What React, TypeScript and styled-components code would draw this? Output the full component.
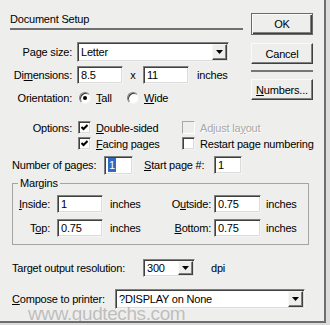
import React from 'react';
import styled, { createGlobalStyle } from 'styled-components';

const Global = createGlobalStyle`
  html, body { margin: 0; padding: 0; background: #dcdcdc; }
  body {
    font-family: 'Liberation Sans', Arial, sans-serif;
    font-size: 11px;
    letter-spacing: -0.2px;
    color: #000;
  }
`;

const BG = '#eeeeec';

const Dialog = styled.div`
  position: relative;
  box-sizing: border-box;
  width: 326px;
  height: 323px;
  background: ${BG};
  border-right: 2px solid #6e6e6e;
  border-bottom: 2px solid #6e6e6e;
  padding-left: 10px;
  display: flex;
  flex-direction: column;
  overflow: hidden;
`;

const Top = styled.div`
  display: flex;
  gap: 8px;
`;

const LeftCol = styled.div`
  width: 233px;
  display: flex;
  flex-direction: column;
`;

const ButtonCol = styled.div`
  width: 62px;
  display: flex;
  flex-direction: column;
  padding-top: 13px;
`;

const Title = styled.div`
  padding-top: 13px;
  height: 13px;
  line-height: 13px;
`;

const Rule = styled.div`
  margin-top: 2px;
  height: 2px;
  background: #707070;
`;

const Row = styled.div<{ $mt: number; $h: number; $ml?: number }>`
  display: flex;
  align-items: center;
  margin-top: ${p => p.$mt}px;
  margin-left: ${p => p.$ml ?? 0}px;
  height: ${p => p.$h}px;
  white-space: nowrap;
`;

const Label = styled.span<{ $w: number; $align?: 'left' | 'right' | 'center'; $ml?: number }>`
  flex: none;
  width: ${p => p.$w}px;
  margin-left: ${p => p.$ml ?? 0}px;
  text-align: ${p => p.$align || 'right'};
  white-space: nowrap;
`;

const Unit = styled.span<{ $ml?: number }>`
  flex: none;
  margin-left: ${p => p.$ml ?? 0}px;
`;

const U = styled.span`
  text-decoration: underline;
`;

const Field = styled.div<{ $w: number; $h: number; $ml?: number }>`
  box-sizing: border-box;
  flex: none;
  width: ${p => p.$w}px;
  height: ${p => p.$h}px;
  margin-left: ${p => p.$ml ?? 0}px;
  background: #fff;
  border: 1px solid;
  border-color: #808080 #f4f4f4 #f4f4f4 #808080;
  box-shadow: inset 1px 1px 0 #404040, inset -1px -1px 0 #dcdcdc;
  padding-left: 3px;
  display: flex;
  align-items: center;
  white-space: nowrap;
  overflow: hidden;
`;

const DropBtn = styled.span`
  box-sizing: border-box;
  flex: none;
  align-self: stretch;
  margin: 1px 1px 1px auto;
  width: 15px;
  background: ${BG};
  border: 1px solid;
  border-color: #f8f8f8 #404040 #404040 #f8f8f8;
  box-shadow: inset -1px -1px 0 #808080;
  display: flex;
  align-items: center;
  justify-content: center;
`;

const Selected = styled.span`
  background: #316ac5;
  color: #fff;
  padding: 0 1px;
  line-height: 14px;
`;

const Button = styled.div<{ $h: number; $mt: number; $default?: boolean }>`
  box-sizing: border-box;
  height: ${p => p.$h}px;
  margin-top: ${p => p.$mt}px;
  display: flex;
  align-items: center;
  justify-content: center;
  background: ${BG};
  border: 1px solid;
  border-color: ${p => (p.$default ? '#6a6a6a' : '#fafafa #404040 #404040 #fafafa')};
  box-shadow: ${p =>
    p.$default
      ? 'inset 1px 1px 0 #fafafa, inset -1px -1px 0 #404040, inset -2px -2px 0 #808080'
      : 'inset -1px -1px 0 #808080'};
`;

const BtnRule = styled.div`
  margin-top: 6px;
  height: 2px;
  background: #777;
`;

const Options = styled.div`
  display: grid;
  grid-template-columns: 62px 110px 1fr;
  grid-auto-rows: 13px;
  row-gap: 3px;
  margin-top: 15px;
`;

const OptLabel = styled.span`
  text-align: right;
  align-self: center;
`;

const CheckItem = styled.div<{ $ml?: number; $disabled?: boolean }>`
  display: flex;
  align-items: center;
  gap: 5px;
  padding-left: ${p => p.$ml ?? 0}px;
  white-space: nowrap;
  color: ${p => (p.$disabled ? '#a8a8a8' : '#000')};
  text-shadow: ${p => (p.$disabled ? '1px 1px 0 #ffffff' : 'none')};
`;

const Box = styled.span<{ $disabled?: boolean }>`
  box-sizing: border-box;
  flex: none;
  width: 13px;
  height: 13px;
  background: ${p => (p.$disabled ? BG : '#fff')};
  border: 1px solid;
  border-color: ${p => (p.$disabled ? '#a8a8a8 #fff #fff #a8a8a8' : '#808080 #f4f4f4 #f4f4f4 #808080')};
  box-shadow: ${p => (p.$disabled ? 'none' : 'inset 1px 1px 0 #404040, inset -1px -1px 0 #dcdcdc')};
  display: flex;
  align-items: center;
  justify-content: center;
`;

const RadioItem = styled.div<{ $w?: number; $ml?: number }>`
  flex: none;
  display: flex;
  align-items: center;
  gap: 5px;
  width: ${p => (p.$w ? `${p.$w}px` : 'auto')};
  margin-left: ${p => p.$ml ?? 0}px;
`;

const RadioCircle = styled.span`
  box-sizing: border-box;
  flex: none;
  width: 12px;
  height: 12px;
  border-radius: 50%;
  background: #fff;
  border: 1px solid;
  border-color: #808080 #f4f4f4 #f4f4f4 #808080;
  box-shadow: inset 1px 1px 0 #404040;
  display: flex;
  align-items: center;
  justify-content: center;
`;

const Dot = styled.span`
  width: 4px;
  height: 4px;
  border-radius: 50%;
  background: #000;
`;

const Group = styled.fieldset`
  box-sizing: border-box;
  width: 297px;
  margin: 3px 0 0 2px;
  padding: 0 0 7px 0;
  border: 1px solid #a4a4a4;
  min-inline-size: 0;
`;

const Legend = styled.legend`
  margin-left: 5px;
  padding: 0 2px;
  line-height: 13px;
`;

const Watermark = styled.div`
  position: absolute;
  left: 28px;
  top: 306px;
  font-family: 'Liberation Sans', Arial, sans-serif;
  font-size: 19px;
  line-height: 16px;
  letter-spacing: -0.4px;
  color: rgba(120, 120, 120, 0.42);
  pointer-events: none;
  white-space: nowrap;
`;

const Arrow = () => (
  <svg width="7" height="4" viewBox="0 0 7 4">
    <polygon points="0,0 7,0 3.5,4" fill="#000" />
  </svg>
);

const Tick = () => (
  <svg width="7" height="7" viewBox="0 0 7 7">
    <polyline points="0.5,3 2.5,5 6.5,1" fill="none" stroke="#000" strokeWidth="2" />
  </svg>
);

const Select: React.FC<{ w: number; h: number; ml?: number; children: React.ReactNode }> = ({ w, h, ml, children }) => (
  <Field $w={w} $h={h} $ml={ml}>
    <span>{children}</span>
    <DropBtn>
      <Arrow />
    </DropBtn>
  </Field>
);

const Checkbox: React.FC<{ checked?: boolean; disabled?: boolean; ml?: number; children: React.ReactNode }> = ({
  checked,
  disabled,
  ml,
  children,
}) => (
  <CheckItem $ml={ml} $disabled={disabled}>
    <Box $disabled={disabled}>{checked && <Tick />}</Box>
    <span>{children}</span>
  </CheckItem>
);

export default function App() {
  return (
    <>
      <Global />
      <Dialog>
        <Top>
          <LeftCol>
            <Title>Document Setup</Title>
            <Rule />
            <Row $mt={12} $h={20}>
              <Label $w={62}>
                Pa<U>g</U>e size:
              </Label>
              <Select w={152} h={20} ml={5}>
                Letter
              </Select>
            </Row>
            <Row $mt={4} $h={18}>
              <Label $w={62}>
                Di<U>m</U>ensions:
              </Label>
              <Field $w={46} $h={18} $ml={5}>
                8.5
              </Field>
              <Label $w={20} $align="center">
                x
              </Label>
              <Field $w={46} $h={18}>
                11
              </Field>
              <Unit $ml={8}>inches</Unit>
            </Row>
            <Row $mt={6} $h={16}>
              <Label $w={62}>Orientation:</Label>
              <RadioItem $w={48} $ml={7}>
                <RadioCircle>
                  <Dot />
                </RadioCircle>
                <span>
                  <U>T</U>all
                </span>
              </RadioItem>
              <RadioItem>
                <RadioCircle />
                <span>
                  <U>W</U>ide
                </span>
              </RadioItem>
            </Row>
          </LeftCol>
          <ButtonCol>
            <Button $h={22} $mt={0} $default>
              OK
            </Button>
            <Button $h={21} $mt={8}>
              Cancel
            </Button>
            <BtnRule />
            <Button $h={21} $mt={7}>
              <span>
                <U>N</U>umbers...
              </span>
            </Button>
          </ButtonCol>
        </Top>

        <Options>
          <OptLabel>Options:</OptLabel>
          <Checkbox checked ml={6}>
            <U>D</U>ouble-sided
          </Checkbox>
          <Checkbox disabled>
            Adjust la<U>y</U>out
          </Checkbox>
          <span />
          <Checkbox checked ml={6}>
            <U>F</U>acing pages
          </Checkbox>
          <Checkbox>Restart page numbering</Checkbox>
        </Options>

        <Row $mt={6} $h={18} $ml={2}>
          <Label $w={92} $align="left">
            Number of <U>p</U>ages:
          </Label>
          <Field $w={29} $h={19}>
            <Selected>1</Selected>
          </Field>
          <Label $w={70} $align="left" $ml={11}>
            <U>S</U>tart page #:
          </Label>
          <Field $w={28} $h={18}>
            1
          </Field>
        </Row>

        <Group>
          <Legend>Margins</Legend>
          <Row $mt={5} $h={18}>
            <Label $w={37}>
              <U>I</U>nside:
            </Label>
            <Field $w={46} $h={18} $ml={7}>
              1
            </Field>
            <Label $w={54} $align="left" $ml={7}>
              inches
            </Label>
            <Label $w={47}>
              O<U>u</U>tside:
            </Label>
            <Field $w={47} $h={18} $ml={3}>
              0.75
            </Field>
            <Unit $ml={5}>inches</Unit>
          </Row>
          <Row $mt={6} $h={18}>
            <Label $w={37}>
              T<U>o</U>p:
            </Label>
            <Field $w={46} $h={18} $ml={7}>
              0.75
            </Field>
            <Label $w={54} $align="left" $ml={7}>
              inches
            </Label>
            <Label $w={47}>
              <U>B</U>ottom:
            </Label>
            <Field $w={47} $h={18} $ml={3}>
              0.75
            </Field>
            <Unit $ml={5}>inches</Unit>
          </Row>
        </Group>

        <Row $mt={14} $h={18} $ml={2}>
          <Label $w={131} $align="left">
            Tar<U>g</U>et output resolution:
          </Label>
          <Select w={52} h={18}>
            300
          </Select>
          <Unit $ml={16}>dpi</Unit>
        </Row>

        <Row $mt={12} $h={20} $ml={2}>
          <Label $w={103} $align="left">
            <U>C</U>ompose to printer:
          </Label>
          <Select w={190} h={20}>
            ?DISPLAY on None
          </Select>
        </Row>

        <Watermark>www.gudtechs.com</Watermark>
      </Dialog>
    </>
  );
}
